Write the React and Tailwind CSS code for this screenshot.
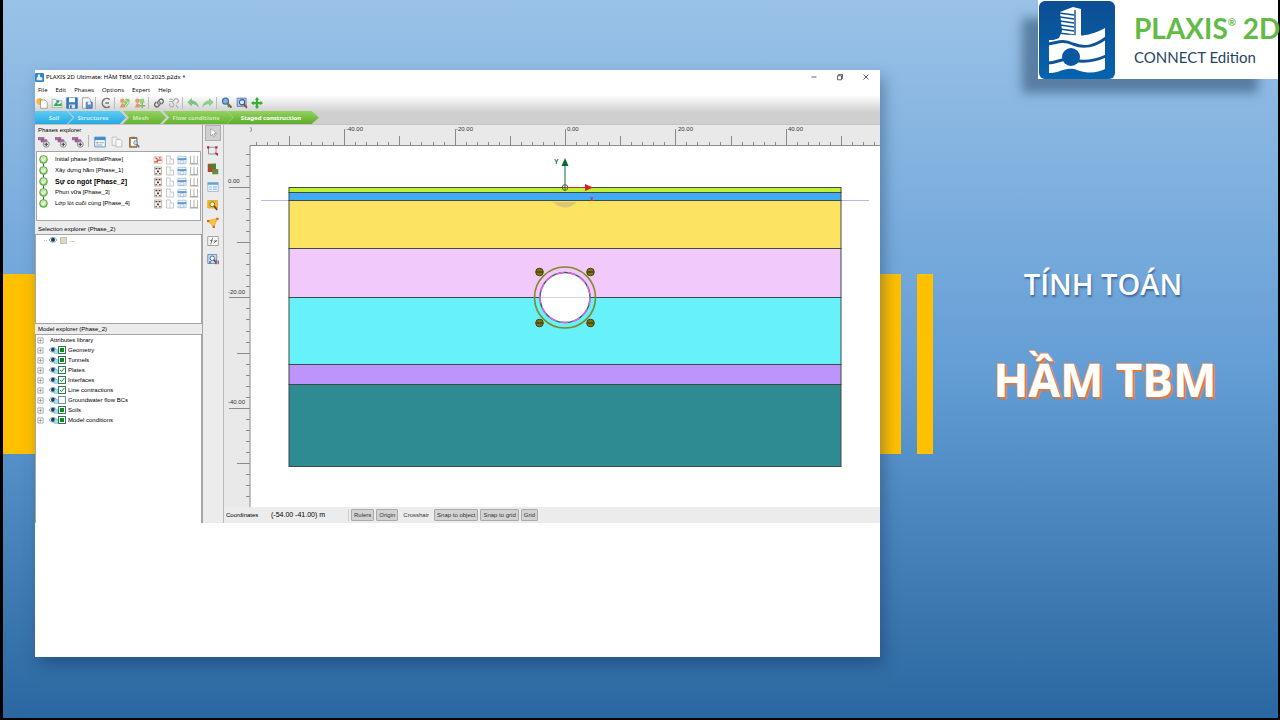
import React from 'react'
import clsx from 'clsx'

const Svg = ({ size = 'w-3 h-3', children }) => (
  <svg viewBox="0 0 16 16" className={clsx('shrink-0', size)} fill="none" aria-hidden="true">
    {children}
  </svg>
)

const icons = {
  newFile: (
    <>
      <circle cx="5" cy="6" r="4.500" fill="#f7b733" />
      <path d="M6 4h6l3 3v8H6z" fill="#fff" stroke="#8d8d8d" />
    </>
  ),
  open: (
    <>
      <path d="M1.500 3h5l1 2h7v9h-13z" fill="#e8f2e8" stroke="#8fb0a0" />
      <path d="M3 12l4-5 3 3 4-2v4z" fill="#3ca54a" />
      <circle cx="9" cy="6" r="2" fill="#4a90c8" />
    </>
  ),
  save: (
    <>
      <path d="M1 1h14v14H1z" fill="#3d7cc0" stroke="#2a5f9e" />
      <path d="M4 1h8v6H4z" fill="#fff" />
      <path d="M4 10h8v5H4z" fill="#d7e6f4" />
      <path d="M5.500 11h2v4h-2z" fill="#2a5f9e" />
    </>
  ),
  export: (
    <>
      <path d="M2 1h8l3 3v11H2z" fill="#f6f6f6" stroke="#8d8d8d" />
      <path d="M7 7h8v8H7z" fill="#5a8fc6" stroke="#3a6ba3" />
      <path d="M9 7h4v3H9z" fill="#fff" />
    </>
  ),
  refresh: <path d="M13 3.500A6 6 0 1 0 13 12.500M12 8H7" stroke="#777" strokeWidth="2" />,
  steps: (
    <>
      <circle cx="4.500" cy="5" r="3" fill="#e2a070" />
      <path d="M1 14l3-6 4 2v4z" fill="#dd9a63" />
      <path d="M7 7l2-5 5 1v5l-5 6z" fill="#8cc971" />
      <path d="M8 4l5 4M8 12l5-5" stroke="#e9f5e2" />
    </>
  ),
  stepsAlt: (
    <>
      <circle cx="4.500" cy="5" r="3" fill="#e2a070" />
      <path d="M7 3l6-1 1 6-6 1z" fill="#9bcf83" />
      <path d="M1 14l3-6 4 2v4z" fill="#dd9a63" />
      <path d="M11 8v7M8 11.500h7" stroke="#7dbb62" strokeWidth="2" />
    </>
  ),
  link: (
    <g stroke="#666" strokeWidth="1.800" strokeLinecap="round">
      <path d="M7 9.500a3 3 0 0 1 0-4l2.500-2.500a3 3 0 0 1 4 4L12 9" />
      <path d="M9 6.500a3 3 0 0 1 0 4L6.500 13a3 3 0 0 1-4-4L4 7" />
    </g>
  ),
  unlink: (
    <g stroke="#aaa" strokeWidth="1.600" strokeLinecap="round">
      <path d="M7 9a3 3 0 0 1 0-4l2.500-2.500a3 3 0 0 1 4 4L12 8" />
      <path d="M8 10.500L6.500 13a3 3 0 0 1-4-4M2 3h4M2 6h3M11 11l2 3" />
    </g>
  ),
  undo: <path d="M1 7l5-5v3c5 0 8 3 9 8-3-3-5-4-9-4v3z" fill="#7cc87d" stroke="#62b066" strokeWidth=".6" />,
  redo: <path d="M15 7l-5-5v3c-5 0-8 3-9 8 3-3 5-4 9-4v3z" fill="#8ed08e" stroke="#74bb76" strokeWidth=".6" />,
  zoomFit: (
    <>
      <circle cx="6" cy="5.500" r="4" fill="#7fb2dd" stroke="#3f6fa0" strokeWidth="1.500" />
      <path d="M9 9l5 5" stroke="#a3452f" strokeWidth="2.500" />
      <path d="M8 12h5M10.500 9.500v5" stroke="#3f9f3f" strokeWidth="1.300" />
    </>
  ),
  zoomBox: (
    <>
      <path d="M1.500 1.500h12v11h-12z" fill="#a9c7e8" stroke="#4a6fa8" />
      <circle cx="8" cy="7" r="3.500" fill="#dcebf8" stroke="#355e96" strokeWidth="1.400" />
      <path d="M10.500 9.500l4 5" stroke="#a3452f" strokeWidth="2.400" />
    </>
  ),
  pan: <path d="M8 0l3 3.500H9.500v3h3V5L16 8l-3.500 3V9.500h-3v3H11L8 16l-3-3.500h1.500v-3h-3V11L0 8l3.500-3v1.500h3v-3H5z" fill="#35b135" />,
  addPhase: (
    <>
      <path d="M0 2h8v3H0zM4 5h8v3H4z" fill="#c8607c" stroke="#6f58a8" strokeWidth=".8" />
      <circle cx="11" cy="11" r="4" fill="#eee" stroke="#777" />
      <path d="M8.500 11h5M11 8.500v5" stroke="#444" strokeWidth="1.500" />
    </>
  ),
  phaseWindow: (
    <>
      <path d="M1 1.500h14v13H1z" fill="#fff" stroke="#2e78b7" />
      <path d="M1 1.500h14v4H1z" fill="#3b8ed0" />
      <path d="M3 8h3v2H3z" fill="#d28a70" />
      <path d="M7 9h6M3 12h8" stroke="#4d87ba" />
    </>
  ),
  copy: (
    <>
      <path d="M1.500 1.500h6l2 2v9h-8z" fill="#f7f7f7" stroke="#a6b3bd" />
      <path d="M6.500 4.500h6l2 2v8h-8z" fill="#f7f7f7" stroke="#a6b3bd" />
    </>
  ),
  paste: (
    <>
      <path d="M2 2h10v13H2z" fill="#c08a50" stroke="#7b5530" />
      <path d="M4 4h7v9H4z" fill="#fff" />
      <path d="M5 1h4v3H5z" fill="#777" />
      <circle cx="10" cy="9" r="2.500" fill="#cfe2f5" stroke="#5579a0" />
      <path d="M12 11l3 4" stroke="#5579a0" strokeWidth="2" />
    </>
  ),
  cursor: <path d="M5 2v10l2.500-2.500L9 13l2-1-1.700-3.300H13z" fill="#fff" stroke="#999" />,
  selectBox: (
    <>
      <path d="M2 3h10v9H2z" stroke="#777" />
      <path d="M0 1.500h3v3H0zM11 1.500h3v3h-3zM10 10l5 1-1 4z" fill="#b5224a" />
    </>
  ),
  soils: (
    <>
      <path d="M1 1h11v11H1z" fill="#a25428" />
      <path d="M6 1h6v6H6z" fill="#3c8b3c" />
      <path d="M7 8h8v7H7z" fill="#4f9845" />
      <path d="M8 13l5-4" stroke="#d7512d" strokeWidth="2" />
    </>
  ),
  table: (
    <>
      <path d="M1 2h14v12H1z" fill="#e9f3fb" stroke="#8cb4d4" />
      <path d="M1 2h14v3H1z" fill="#5ea5d8" />
      <path d="M3 8h3M3 11h3M8 8h5M8 11h5" stroke="#8ab0ce" strokeWidth="1.500" />
    </>
  ),
  inspect: (
    <>
      <path d="M1 2h13v10H1z" fill="#f0b928" stroke="#d6a526" />
      <circle cx="7" cy="7" r="3.200" fill="#fff4c9" stroke="#7f6a30" strokeWidth="1.300" />
      <path d="M9.500 9.500l4 5" stroke="#7a3c1f" strokeWidth="2.200" />
    </>
  ),
  polygon: (
    <>
      <path d="M1 5l13-3-5 11z" fill="#f9c62f" stroke="#e8a22c" />
      <path d="M0 4h3v3H0zM12.500 1h3v3h-3zM7.500 11.500h3v3h-3z" fill="#c9682b" />
    </>
  ),
  fx: (
    <>
      <path d="M1 2h14v12H1z" fill="#fafafa" stroke="#888" />
      <path d="M8 4c-2 0-1.500 8-3.500 8M4 7.500h3M9 8h4M9 11l4-4" stroke="#444" />
    </>
  ),
  report: (
    <>
      <path d="M1 2h12v12H1z" fill="#c9dbee" stroke="#5b7ca5" />
      <circle cx="7" cy="7" r="3" fill="#fff" stroke="#3a6497" strokeWidth="1.300" />
      <path d="M4 11v3M9 9l3 4" stroke="#3a6497" strokeWidth="2" />
      <path d="M12 9v6M15 10v5" stroke="#9b3c3c" strokeWidth="1.400" />
    </>
  ),
  loadRed: (
    <>
      <path d="M1.500 2.500h13v11h-13z" fill="#fdf1ef" stroke="#dcb0a8" />
      <path d="M2 11h5V8h7M4 4l3 3M11 3v3" stroke="#cf4b3a" strokeWidth="2" />
    </>
  ),
  dice: (
    <>
      <path d="M2.500 1.500h11v13h-11z" fill="#f5f1ee" stroke="#9d8f88" />
      <path d="M4 3h3v2H4zM9 3h3v2H9zM6.500 7h3v3h-3zM4 11h2v2H4zM10 11h2v2h-2z" fill="#4a332e" />
    </>
  ),
  pageStep: (
    <>
      <path d="M2.500 1.500h6v5h5v8h-11z" fill="#fbfbfb" stroke="#aaa" />
      <path d="M8 7v7" stroke="#c4c4c4" />
    </>
  ),
  pool: (
    <>
      <path d="M1.500 2h13v12h-13z" fill="#eef6fd" stroke="#88add0" />
      <path d="M1 5h14v3H1z" fill="#5f9bd3" />
      <path d="M5 9h6v4H5z" fill="#fff" stroke="#8faac4" />
    </>
  ),
  column: <path d="M2.500 1.500v12h11v-12M8 1v12M1 14.500h14" stroke="#888" />,
}

const mainTools = [
  ['newFile', 'New'],
  ['open', 'Open'],
  ['save', 'Save'],
  ['export', 'Export'],
  null,
  ['refresh', 'Refresh'],
  null,
  ['steps', 'Run phases'],
  ['stepsAlt', 'Calculate'],
  null,
  ['link', 'Link'],
  ['unlink', 'Unlink'],
  null,
  ['undo', 'Undo'],
  ['redo', 'Redo'],
  null,
  ['zoomFit', 'Zoom extents'],
  ['zoomBox', 'Zoom window'],
  ['pan', 'Pan'],
]

const phaseTools = [
  ['addPhase', 'Add phase'],
  ['addPhase', 'Insert phase'],
  ['addPhase', 'Delete phase'],
  null,
  ['phaseWindow', 'Phases window'],
  ['copy', 'Copy'],
  ['paste', 'Paste'],
]

const sideTools = [
  ['cursor', 'Select'],
  ['selectBox', 'Select area'],
  ['soils', 'Show materials'],
  ['table', 'Tables'],
  ['inspect', 'Inspect'],
  ['polygon', 'Select points'],
  ['fx', 'Expressions'],
  ['report', 'Preview'],
]

const phases = [
  { name: 'Initial phase [InitialPhase]', icon: 'loadRed' },
  { name: 'Xây dựng hầm [Phase_1]', icon: 'dice' },
  { name: 'Sự co ngót [Phase_2]', icon: 'dice', active: true },
  { name: 'Phun vữa [Phase_3]', icon: 'dice' },
  { name: 'Lớp lót cuối cùng [Phase_4]', icon: 'dice' },
]

const model = [
  { name: 'Attributes library' },
  { name: 'Geometry', state: 'mixed' },
  { name: 'Tunnels', state: 'mixed' },
  { name: 'Plates', state: 'on' },
  { name: 'Interfaces', state: 'on' },
  { name: 'Line contractions', state: 'on' },
  { name: 'Groundwater flow BCs', state: 'off' },
  { name: 'Soils', state: 'mixed' },
  { name: 'Model conditions', state: 'mixed' },
]

const layers = [
  { y: 62, h: 5, fill: '#c1f032' },
  { y: 67, h: 8, fill: '#3faaf5' },
  { y: 75, h: 48, fill: '#fce362' },
  { y: 123, h: 49, fill: '#f1c9fb' },
  { y: 172, h: 67, fill: '#66f1fb' },
  { y: 239, h: 20, fill: '#bd94fb' },
  { y: 259, h: 82, fill: '#2e8b91' },
]

const Tool = ({ icon, label, className }) => (
  <button type="button" aria-label={label} className={clsx('flex items-center justify-center', className)}>
    <Svg>{icons[icon]}</Svg>
  </button>
)

const Eye = ({ page }) => (
  <svg viewBox="0 0 18 16" className="w-[9px] h-2" fill="none" aria-hidden="true">
    <path d="M0 8c4-7 12-7 16 0-4 6-12 6-16 0z" fill="#dfeaf0" stroke="#7c97a5" strokeWidth="1.500" />
    <circle cx="8" cy="7.500" r="4" fill="#1d3d5c" />
    {page && <path d="M11 7h6v8h-6z" fill="#9fe3ee" stroke="#5fb9cc" />}
  </svg>
)

const TitleBar = () => (
  <header className="flex items-center h-[14px] bg-white">
    <Svg size="w-[9px] h-[9px] mr-[2px]">
      <rect width="16" height="16" rx="2" fill="#2f86c6" />
      <path d="M5 7V3l4-1v5l4 1v5H3V8z" fill="#e5f2fb" />
    </Svg>
    <h1 className="grow text-[6px] leading-[14px] font-['Noto_Sans',sans-serif] whitespace-nowrap">
      PLAXIS 2D Ultimate: HẦM TBM_02.10.2025.p2dx *
    </h1>
    <div className="flex gap-4 pr-[9px]">
      {['M3 8h10', 'M3 5.500h8v8H3zM5 5V3h8v8h-2', 'M3 3l10 10M13 3L3 13'].map((d, i) => (
        <button key={d} type="button" aria-label={['Minimise', 'Restore', 'Close'][i]} className="px-[1px]">
          <Svg size="w-2 h-2">
            <path d={d} stroke="#333" strokeWidth="1.500" />
          </Svg>
        </button>
      ))}
    </div>
  </header>
)

const Tabs = () => (
  <nav className="flex h-[13px] text-[6px] leading-[12px] font-bold text-white text-center font-['Noto_Sans',sans-serif] whitespace-nowrap">
    <button
      type="button"
      className="w-[38px] bg-linear-to-b from-[#5cccf5] to-[#25a9e0] text-[#c5edfc] [clip-path:polygon(0_0,84%_0,100%_50%,84%_100%,0_100%)]"
    >
      Soil
    </button>
    <button
      type="button"
      className="w-[58px] -ml-[5px] pr-2 bg-linear-to-b from-[#5cccf5] to-[#25a9e0] text-[#c5edfc] [clip-path:polygon(0_0,89%_0,100%_50%,89%_100%,0_100%,11%_50%)]"
    >
      Structures
    </button>
    <button
      type="button"
      className="w-[43px] -ml-[3px] pr-2 bg-linear-to-b from-[#93d35e] to-[#65b22f] text-[#cdeab7] [clip-path:polygon(0_0,86%_0,100%_50%,86%_100%,0_100%,14%_50%)]"
    >
      Mesh
    </button>
    <button
      type="button"
      className="w-[70px] -ml-[3px] pr-1 bg-linear-to-b from-[#93d35e] to-[#65b22f] text-[#cdeab7] [clip-path:polygon(0_0,91%_0,100%_50%,91%_100%,0_100%,9%_50%)]"
    >
      Flow conditions
    </button>
    <button
      type="button"
      aria-current="page"
      className="w-[92px] -ml-[6px] pr-1 bg-linear-to-b from-[#93d35e] to-[#5dab28] [clip-path:polygon(0_0,92%_0,100%_50%,92%_100%,0_100%,7%_50%)]"
    >
      Staged construction
    </button>
  </nav>
)

const PanelTitle = ({ children }) => (
  <h2 className="h-[10px] px-[3px] leading-[10px] whitespace-nowrap">{children}</h2>
)

const PhasesExplorer = () => (
  <section>
    <PanelTitle>Phases explorer</PanelTitle>
    <div className="flex items-start gap-[4px] h-[16px] pl-[2px]">
      {phaseTools.map((tool, i) =>
        tool ? (
          <Tool key={i} icon={tool[0]} label={tool[1]} className="w-[13px] h-[13px]" />
        ) : (
          <span key={i} className="w-px h-3 bg-[#b5b5b5]" />
        ),
      )}
    </div>
    <ul className="h-[70px] mx-px pt-[2px] pl-[2px] pr-px bg-white border border-[#a5a5a5]">
      {phases.map((phase, i) => (
        <li key={phase.name} className="flex items-center h-[11px]">
          <Svg size="w-[9px] h-[11px]">
            {i > 0 && <path d="M8-3v4" stroke="#555" strokeWidth="2" />}
            {i < 4 && <path d="M8 15v4" stroke="#555" strokeWidth="2" />}
            <circle cx="8" cy="8" r="7" fill="#7cca55" stroke="#3d8f2a" />
            <circle cx="8" cy="7" r="5" fill="#c9ebb3" />
            <path d="M5 8l2.500 2.500L11 6" stroke="#fff" strokeWidth="1.800" />
          </Svg>
          <span
            className={clsx(
              'grow pl-[7px] leading-[11px] whitespace-nowrap',
              phase.active && 'text-[7px] font-bold',
            )}
          >
            {phase.name}
          </span>
          <span className="flex gap-[2px]">
            {[phase.icon, 'pageStep', 'pool', 'column'].map((icon) => (
              <Svg key={icon} size="w-[10px] h-[10px]">
                {icons[icon]}
              </Svg>
            ))}
          </span>
        </li>
      ))}
    </ul>
  </section>
)

const SelectionExplorer = () => (
  <section className="pt-[3px]">
    <PanelTitle>Selection explorer (Phase_2)</PanelTitle>
    <div className="h-[90px] bg-white border border-[#a5a5a5] pl-2">
      <div className="flex items-center gap-[2px] h-[10px]">
        <span className="w-[3px] border-t border-dotted border-[#bbb]" />
        <Eye />
        <span className="w-[7px] h-[7px] bg-[#dcd9c8] border border-[#c5c2b2]" />
        <span className="pl-[1px]">...</span>
      </div>
    </div>
  </section>
)

const ModelExplorer = () => (
  <section className="grow flex flex-col">
    <PanelTitle>Model explorer (Phase_2)</PanelTitle>
    <ul className="grow bg-white border border-b-0 border-[#a5a5a5]">
      {model.map(({ name, state }) => (
        <li key={name} className="flex items-center h-[10px] pl-px">
          <button type="button" aria-label={`Expand ${name}`} className="w-3">
            <Svg size="w-[7px] h-[7px]">
              <path d="M2 2h12v12H2zM4 8h8M8 4v8" stroke="#888" strokeWidth="1.500" />
            </Svg>
          </button>
          {state ? (
            <label className="flex items-center whitespace-nowrap">
              <Eye page />
              <span className="grid w-2 h-2">
                <input
                  type="checkbox"
                  defaultChecked={state !== 'off'}
                  className={clsx(
                    'appearance-none col-start-1 row-start-1 w-2 h-2 border bg-white',
                    state === 'off' ? 'border-[#6b93ad]' : 'border-[#36785a]',
                  )}
                />
                <svg viewBox="0 0 8 8" className="col-start-1 row-start-1 w-2 h-2" fill="none" aria-hidden="true">
                  {state === 'mixed' && <path d="M2 2h4v4H2z" fill="#118a1c" />}
                  {state === 'on' && <path d="M2 4l1.500 1.700L6.300 2" stroke="#1b8a2a" />}
                </svg>
              </span>
              <span className="pl-[2px] leading-[10px]">{name}</span>
            </label>
          ) : (
            <span className="pl-px leading-[10px]">{name}</span>
          )}
        </li>
      ))}
    </ul>
  </section>
)

const UNIT = 11.04
const steps = Array.from({ length: 57 }, (_, i) => i - 28)

// Drawing area with both rulers; model origin sits at (341, 62)
const Canvas = () => (
  <svg viewBox="0 0 656 382" className="block w-full h-auto" role="img" aria-label="Soil model">
    <rect width="656" height="382" fill="#e9e9e9" />
    <rect x="26" y="21" width="630" height="361" fill="#fff" />
    <path d="M26 382V20.500H656" fill="none" stroke="#8a8a8a" />

    <g stroke="#8a8a8a">
      {steps.map((i) => {
        const x = Math.round(341 + i * UNIT) + 0.5
        const length = i % 10 === 0 ? 17 : i % 5 === 0 ? 10 : 4
        return <path key={i} d={`M${x} 21v${-length}`} />
      })}
      {steps
        .filter((i) => i >= -3)
        .map((i) => {
          const y = Math.round(62 + i * UNIT) + 0.5
          const length = i % 10 === 0 ? 21 : i % 5 === 0 ? 13 : 4
          return <path key={i} d={`M26 ${y}h${-length}`} />
        })}
    </g>
    <g fontSize="6" fill="#333" className="font-['Liberation_Sans',sans-serif]">
      <text x="26" y="6">)</text>
      <text x="122" y="6">-40.00</text>
      <text x="232" y="6">-20.00</text>
      <text x="343" y="6">0.00</text>
      <text x="454" y="6">20.00</text>
      <text x="564" y="6">40.00</text>
      <text x="4" y="58">0.00</text>
      <text x="4" y="169">-20.00</text>
      <text x="4" y="279">-40.00</text>
    </g>

    <path d="M37 75.500H645" stroke="#b3b8ee" />
    {layers.map(({ y, h, fill }) => (
      <rect key={y} x="65" y={y + 0.5} width="552" height={h} fill={fill} stroke="#3d4a45" />
    ))}
    <path d="M329 77q12 11 24 0z" fill="#d9c773" />

    <circle cx="341" cy="172.500" r="30.500" fill="none" stroke="#7f8a2a" strokeWidth="1.600" />
    <circle cx="341" cy="172.500" r="25" fill="#fff" stroke="#2c6e55" strokeWidth="1.500" />
    <circle cx="341" cy="172.500" r="25" fill="none" stroke="#f05bea" strokeWidth="1.500" strokeDasharray="8 4" />
    <path d="M317 172.500h48" stroke="#d5d5d5" />
    {[[315.5, 147], [366.5, 147], [315.5, 198], [366.5, 198]].map(([x, y]) => (
      <g key={`${x}-${y}`}>
        <circle cx={x} cy={y} r="3.800" fill="#7d7412" stroke="#453f0a" />
        <path d={`M${x - 3} ${y}h6`} stroke="#2d2906" />
      </g>
    ))}

    <path d="M341 66V39" stroke="#13713b" />
    <path d="M341 33l3.500 8h-7z" fill="#0b6b2f" />
    <path d="M341 62.500h21" stroke="#c4342f" />
    <path d="M369 62.500l-8-3.500v7z" fill="#d81e2c" />
    <circle cx="341" cy="62.500" r="2.800" fill="none" stroke="#6d5b34" />
    <g fontSize="7" className="font-['Liberation_Sans',sans-serif] font-bold">
      <text x="330" y="39" fill="#2c6e4c">Y</text>
      <text x="366" y="76" fill="#c9305a">x</text>
    </g>
  </svg>
)

const StatusBar = () => (
  <footer className="flex items-center h-[16px] bg-[#ececec] text-[#333] whitespace-nowrap">
    <span className="w-[44px] pl-[2px] text-black">Coordinates</span>
    <output className="w-[80px] pl-[3px] text-[7px] text-black">(-54.00 -41.00) m</output>
    <div className="flex gap-[2px] pl-[2px] border-l border-[#ccc]">
      {['Rulers', 'Origin', 'Crosshair', 'Snap to object', 'Snap to grid', 'Grid'].map((name) => (
        <button
          key={name}
          type="button"
          aria-pressed={name !== 'Crosshair'}
          className={clsx(
            'h-3 px-[2px] leading-[10px] border rounded-[1px]',
            name === 'Crosshair' ? 'border-transparent' : 'bg-[#d2d2d2] border-[#aaa]',
          )}
        >
          {name}
        </button>
      ))}
    </div>
  </footer>
)

const PlaxisWindow = () => (
  <main className="bg-white text-black text-[6px] leading-[10px] font-['Liberation_Sans','Noto_Sans',sans-serif] pb-[134px] shadow-[4px_8px_14px_rgba(20,50,90,0.4)]">
    <TitleBar />
    <nav className="flex h-[11px] pl-[3px] gap-2 font-['Open_Sans',sans-serif]">
      {['File', 'Edit', 'Phases', 'Options', 'Expert', 'Help'].map((item) => (
        <button key={item} type="button" className="leading-[10px]">
          {item}
        </button>
      ))}
    </nav>
    <div className="bg-linear-to-b from-white to-[#cfcfcf] to-60% border-b border-[#c4c4c4]">
      <div className="flex items-center gap-[2px] h-[16px]">
        {mainTools.map((tool, i) =>
          tool ? (
            <Tool key={i} icon={tool[0]} label={tool[1]} className="w-[13px] h-[13px]" />
          ) : (
            <span key={i} className="w-[2px] h-3 border-l border-[#bbb]" />
          ),
        )}
      </div>
      <Tabs />
    </div>
    <div className="flex bg-[#ececec]">
      <aside className="flex flex-col w-[168px] shrink-0 border-r border-[#a5a5a5]">
        <PhasesExplorer />
        <SelectionExplorer />
        <ModelExplorer />
      </aside>
      <div className="flex flex-col items-center gap-[2px] w-[21px] shrink-0 border-r border-[#bbb]">
        {sideTools.map(([icon, label], i) => (
          <Tool
            key={icon}
            icon={icon}
            label={label}
            className={clsx('w-4 h-4', i === 0 && 'bg-[#d0d0d0] border border-[#b0b0b0]')}
          />
        ))}
      </div>
      <div className="grow min-w-0">
        <Canvas />
        <StatusBar />
      </div>
    </div>
  </main>
)

const Logo = () => (
  <div className="flex items-center w-[240px] h-[79px] pl-px bg-white whitespace-nowrap shadow-[-18px_16px_10px_-2px_rgba(70,105,140,0.75)]">
    <svg viewBox="0 0 76 78" className="w-[76px] h-[78px] shrink-0" fill="none" aria-hidden="true">
      <defs>
        <linearGradient id="logo-blue" x1="0" y1="0" x2="0" y2="1">
          <stop offset="0" stopColor="#0c4e93" />
          <stop offset="1" stopColor="#0663ae" />
        </linearGradient>
      </defs>
      <rect width="76" height="78" rx="6" fill="url(#logo-blue)" />
      <path d="M21 11l13-5 8 2v28l-22 1 3-7z" fill="#fff" />
      <path
        d="M20 12l15 2M21 16l14 2M21 20l14 2M21 24l14 2M21 28l14 2M20 32l15 2"
        stroke="#0f5499"
        strokeWidth="1.600"
      />
      <path d="M36 9v27" stroke="#0f5499" strokeWidth="1.400" />
      <path d="M10 39c10 1 13-7 24-5 10 2 21-1 32-7v41c-8 4-16 5-28 1-12-4-18 4-28 3z" fill="#fff" />
      <path d="M9 43c9-1 14-5 25 0 12 5 22 2 33-6" stroke="#0f5499" strokeWidth="3" />
      <path d="M9 62c10 0 14-6 25-3 12 3 22 1 33-4" stroke="#0f5499" strokeWidth="3" />
      <circle cx="32" cy="56" r="9" fill="#0b58a2" />
    </svg>
    <div className="pl-[19px] font-['Lato',sans-serif]">
      <p className="text-[28px] leading-[34px] font-bold text-[#62bb46]">
        PLAXIS<sup className="text-[10px] top-[-13px]">®</sup> 2D
      </p>
      <p className="text-[15px] leading-[24px] text-[#27455f]">CONNECT Edition</p>
    </div>
  </div>
)

export default function App() {
  return (
    <div className="min-h-screen flex bg-black pl-[3px] pr-[2px] pb-[2px]">
      <div className="grow min-w-0 grid grid-cols-[minmax(0,1fr)_345px] bg-linear-to-b from-[#9ac2e7] via-[#659fd6] via-50% to-[#2a67a0]">
        <div className="grid">
          <div className="col-start-1 row-start-1 mt-[274px] h-[180px] flex gap-4">
            <div className="grow bg-[#ffc000]" />
            <div className="w-4 bg-[#ffc000]" />
          </div>
          <div className="col-start-1 row-start-1 pt-[70px] pl-8 pr-[53px]">
            <PlaxisWindow />
          </div>
        </div>
        <div className="flex flex-col items-end">
          <Logo />
          <div className="w-full pt-[184px] pl-[1px] pr-[6px] text-center text-white font-['Open_Sans','Noto_Sans',sans-serif] whitespace-nowrap">
            <p className="text-[29px] leading-[42px] font-semibold [text-shadow:1px_2px_2px_rgba(40,80,130,0.7)]">TÍNH TOÁN</p>
            <p className="pt-[40px] pl-1 text-[46px] leading-[68px] font-bold [text-shadow:-1px_-1px_0_#f0a070,1px_1px_0_#e07a3c,2px_2px_0_#e07a3c]">
              HẦM TBM
            </p>
          </div>
        </div>
      </div>
    </div>
  )
}
